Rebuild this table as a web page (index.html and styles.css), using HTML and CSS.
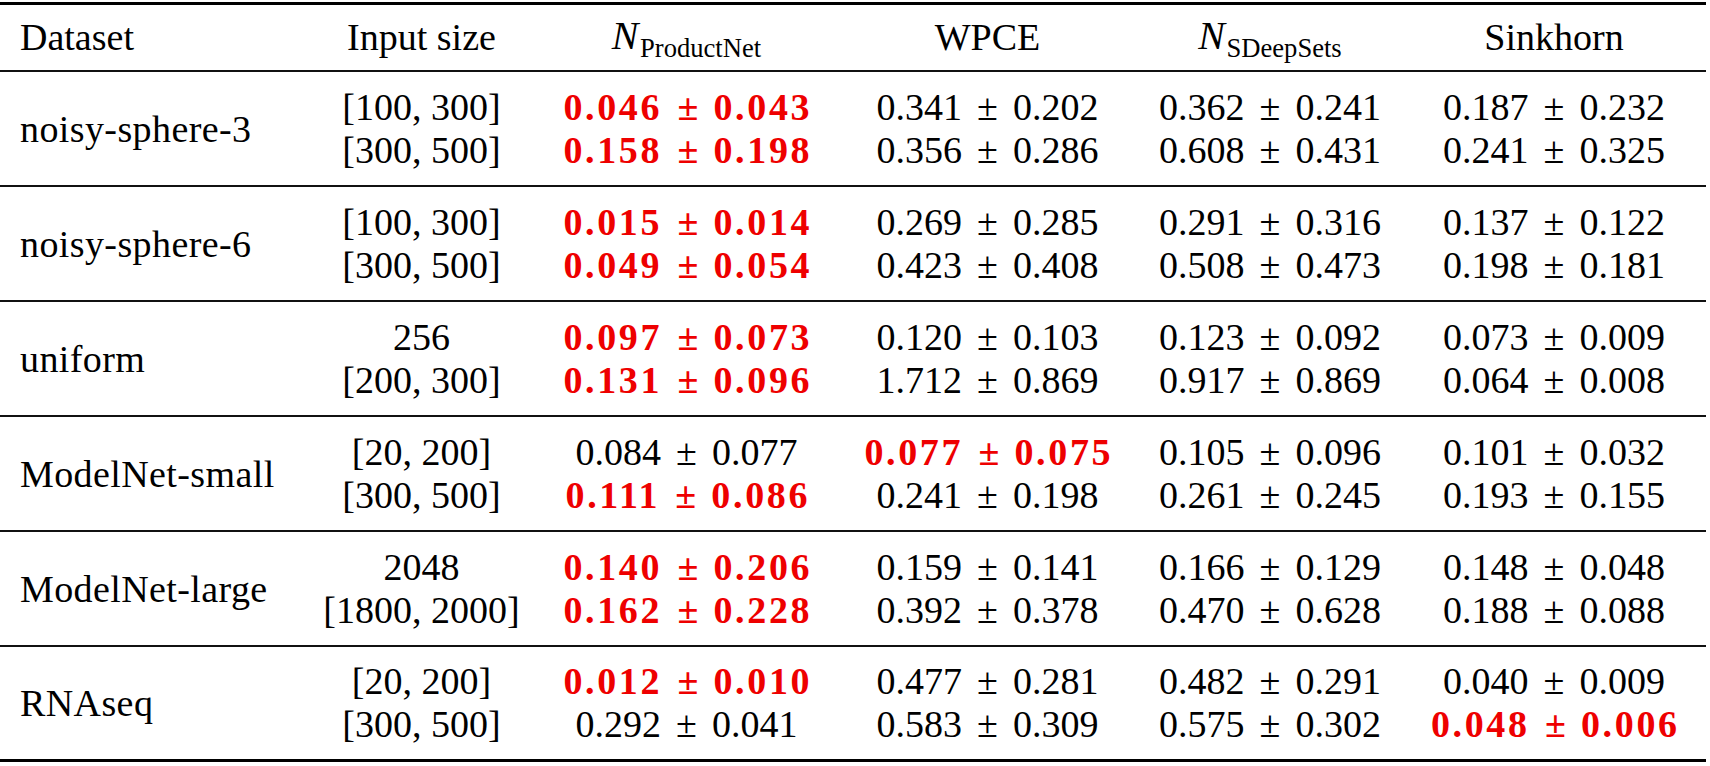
FILE: index.html
```html
<!DOCTYPE html>
<html>
<head>
<meta charset="utf-8">
<link rel="stylesheet" href="styles.css">
</head>
<body>
<div class="results-table">
  <div class="rt-head">
    <div class="rt-cell rt-ds">Dataset</div>
    <div class="rt-cell">Input size</div>
    <div class="rt-cell"><span class="rt-cal">N</span><span class="rt-sub">ProductNet</span></div>
    <div class="rt-cell">WPCE</div>
    <div class="rt-cell"><span class="rt-cal">N</span><span class="rt-sub">SDeepSets</span></div>
    <div class="rt-cell">Sinkhorn</div>
  </div>

  <div class="rt-sec">
    <div class="rt-ds">noisy-sphere-3</div>
    <div class="rt-cell">[100, 300]</div>
    <div class="rt-cell rt-best"><span class="rt-num">0.046</span><span class="rt-pm">±</span><span class="rt-num">0.043</span></div>
    <div class="rt-cell"><span class="rt-num">0.341</span><span class="rt-pm">±</span><span class="rt-num">0.202</span></div>
    <div class="rt-cell"><span class="rt-num">0.362</span><span class="rt-pm">±</span><span class="rt-num">0.241</span></div>
    <div class="rt-cell"><span class="rt-num">0.187</span><span class="rt-pm">±</span><span class="rt-num">0.232</span></div>
    <div class="rt-cell">[300, 500]</div>
    <div class="rt-cell rt-best"><span class="rt-num">0.158</span><span class="rt-pm">±</span><span class="rt-num">0.198</span></div>
    <div class="rt-cell"><span class="rt-num">0.356</span><span class="rt-pm">±</span><span class="rt-num">0.286</span></div>
    <div class="rt-cell"><span class="rt-num">0.608</span><span class="rt-pm">±</span><span class="rt-num">0.431</span></div>
    <div class="rt-cell"><span class="rt-num">0.241</span><span class="rt-pm">±</span><span class="rt-num">0.325</span></div>
  </div>

  <div class="rt-sec">
    <div class="rt-ds">noisy-sphere-6</div>
    <div class="rt-cell">[100, 300]</div>
    <div class="rt-cell rt-best"><span class="rt-num">0.015</span><span class="rt-pm">±</span><span class="rt-num">0.014</span></div>
    <div class="rt-cell"><span class="rt-num">0.269</span><span class="rt-pm">±</span><span class="rt-num">0.285</span></div>
    <div class="rt-cell"><span class="rt-num">0.291</span><span class="rt-pm">±</span><span class="rt-num">0.316</span></div>
    <div class="rt-cell"><span class="rt-num">0.137</span><span class="rt-pm">±</span><span class="rt-num">0.122</span></div>
    <div class="rt-cell">[300, 500]</div>
    <div class="rt-cell rt-best"><span class="rt-num">0.049</span><span class="rt-pm">±</span><span class="rt-num">0.054</span></div>
    <div class="rt-cell"><span class="rt-num">0.423</span><span class="rt-pm">±</span><span class="rt-num">0.408</span></div>
    <div class="rt-cell"><span class="rt-num">0.508</span><span class="rt-pm">±</span><span class="rt-num">0.473</span></div>
    <div class="rt-cell"><span class="rt-num">0.198</span><span class="rt-pm">±</span><span class="rt-num">0.181</span></div>
  </div>

  <div class="rt-sec">
    <div class="rt-ds">uniform</div>
    <div class="rt-cell">256</div>
    <div class="rt-cell rt-best"><span class="rt-num">0.097</span><span class="rt-pm">±</span><span class="rt-num">0.073</span></div>
    <div class="rt-cell"><span class="rt-num">0.120</span><span class="rt-pm">±</span><span class="rt-num">0.103</span></div>
    <div class="rt-cell"><span class="rt-num">0.123</span><span class="rt-pm">±</span><span class="rt-num">0.092</span></div>
    <div class="rt-cell"><span class="rt-num">0.073</span><span class="rt-pm">±</span><span class="rt-num">0.009</span></div>
    <div class="rt-cell">[200, 300]</div>
    <div class="rt-cell rt-best"><span class="rt-num">0.131</span><span class="rt-pm">±</span><span class="rt-num">0.096</span></div>
    <div class="rt-cell"><span class="rt-num">1.712</span><span class="rt-pm">±</span><span class="rt-num">0.869</span></div>
    <div class="rt-cell"><span class="rt-num">0.917</span><span class="rt-pm">±</span><span class="rt-num">0.869</span></div>
    <div class="rt-cell"><span class="rt-num">0.064</span><span class="rt-pm">±</span><span class="rt-num">0.008</span></div>
  </div>

  <div class="rt-sec">
    <div class="rt-ds">ModelNet-small</div>
    <div class="rt-cell">[20, 200]</div>
    <div class="rt-cell"><span class="rt-num">0.084</span><span class="rt-pm">±</span><span class="rt-num">0.077</span></div>
    <div class="rt-cell rt-best"><span class="rt-num">0.077</span><span class="rt-pm">±</span><span class="rt-num">0.075</span></div>
    <div class="rt-cell"><span class="rt-num">0.105</span><span class="rt-pm">±</span><span class="rt-num">0.096</span></div>
    <div class="rt-cell"><span class="rt-num">0.101</span><span class="rt-pm">±</span><span class="rt-num">0.032</span></div>
    <div class="rt-cell">[300, 500]</div>
    <div class="rt-cell rt-best"><span class="rt-num">0.111</span><span class="rt-pm">±</span><span class="rt-num">0.086</span></div>
    <div class="rt-cell"><span class="rt-num">0.241</span><span class="rt-pm">±</span><span class="rt-num">0.198</span></div>
    <div class="rt-cell"><span class="rt-num">0.261</span><span class="rt-pm">±</span><span class="rt-num">0.245</span></div>
    <div class="rt-cell"><span class="rt-num">0.193</span><span class="rt-pm">±</span><span class="rt-num">0.155</span></div>
  </div>

  <div class="rt-sec">
    <div class="rt-ds">ModelNet-large</div>
    <div class="rt-cell">2048</div>
    <div class="rt-cell rt-best"><span class="rt-num">0.140</span><span class="rt-pm">±</span><span class="rt-num">0.206</span></div>
    <div class="rt-cell"><span class="rt-num">0.159</span><span class="rt-pm">±</span><span class="rt-num">0.141</span></div>
    <div class="rt-cell"><span class="rt-num">0.166</span><span class="rt-pm">±</span><span class="rt-num">0.129</span></div>
    <div class="rt-cell"><span class="rt-num">0.148</span><span class="rt-pm">±</span><span class="rt-num">0.048</span></div>
    <div class="rt-cell">[1800, 2000]</div>
    <div class="rt-cell rt-best"><span class="rt-num">0.162</span><span class="rt-pm">±</span><span class="rt-num">0.228</span></div>
    <div class="rt-cell"><span class="rt-num">0.392</span><span class="rt-pm">±</span><span class="rt-num">0.378</span></div>
    <div class="rt-cell"><span class="rt-num">0.470</span><span class="rt-pm">±</span><span class="rt-num">0.628</span></div>
    <div class="rt-cell"><span class="rt-num">0.188</span><span class="rt-pm">±</span><span class="rt-num">0.088</span></div>
  </div>

  <div class="rt-sec rt-last">
    <div class="rt-ds">RNAseq</div>
    <div class="rt-cell">[20, 200]</div>
    <div class="rt-cell rt-best"><span class="rt-num">0.012</span><span class="rt-pm">±</span><span class="rt-num">0.010</span></div>
    <div class="rt-cell"><span class="rt-num">0.477</span><span class="rt-pm">±</span><span class="rt-num">0.281</span></div>
    <div class="rt-cell"><span class="rt-num">0.482</span><span class="rt-pm">±</span><span class="rt-num">0.291</span></div>
    <div class="rt-cell"><span class="rt-num">0.040</span><span class="rt-pm">±</span><span class="rt-num">0.009</span></div>
    <div class="rt-cell">[300, 500]</div>
    <div class="rt-cell"><span class="rt-num">0.292</span><span class="rt-pm">±</span><span class="rt-num">0.041</span></div>
    <div class="rt-cell"><span class="rt-num">0.583</span><span class="rt-pm">±</span><span class="rt-num">0.309</span></div>
    <div class="rt-cell"><span class="rt-num">0.575</span><span class="rt-pm">±</span><span class="rt-num">0.302</span></div>
    <div class="rt-cell rt-best"><span class="rt-num">0.048</span><span class="rt-pm">±</span><span class="rt-num">0.006</span></div>
  </div>
</div>
</body>
</html>
```

FILE: styles.css
```css
html, body {
  margin: 0;
  padding: 0;
  background: #fff;
}

.results-table {
  width: 1706px;
  margin-top: 2px;
  border-top: 3px solid #000;
  font-family: "Liberation Serif", serif !important;
  font-size: 38px;
  color: #000;
}

.results-table .rt-cell,
.results-table .rt-ds,
.results-table .rt-num,
.results-table .rt-pm,
.results-table .rt-sub,
.results-table .rt-cal {
  font-family: "Liberation Serif", serif !important;
}

.rt-head,
.rt-sec {
  display: grid;
  grid-template-columns: 307px 229px 301px 301px 264px 304px;
  align-items: center;
}

.rt-head {
  height: 65px;
  border-bottom: 2px solid #111;
  grid-template-rows: 65px;
}

.rt-sec {
  height: 113px;
  border-bottom: 2px solid #111;
  grid-template-rows: 43px 43px;
  align-content: center;
}

.rt-sec.rt-last {
  height: 112px;
  border-bottom: 3px solid #000;
}

.rt-cell {
  text-align: center;
  white-space: nowrap;
  line-height: 43px;
}

.rt-ds {
  padding-left: 20px;
  white-space: nowrap;
  text-align: left;
}

.rt-sec .rt-ds {
  grid-row: 1 / span 2;
  align-self: center;
  letter-spacing: 0.4px;
}

.rt-pm {
  margin: 0 0.4em;
}

.rt-best {
  color: #ee0000;
  font-weight: bold;
}

.rt-best .rt-num {
  letter-spacing: 0.07em;
}

.rt-best .rt-num:last-child {
  margin-right: -0.07em;
}

.rt-cal {
  font-style: italic;
  font-size: 1.05em;
  margin-right: 0.04em;
}

.rt-sub {
  font-size: 0.7em;
  position: relative;
  top: 0.32em;
}
```
